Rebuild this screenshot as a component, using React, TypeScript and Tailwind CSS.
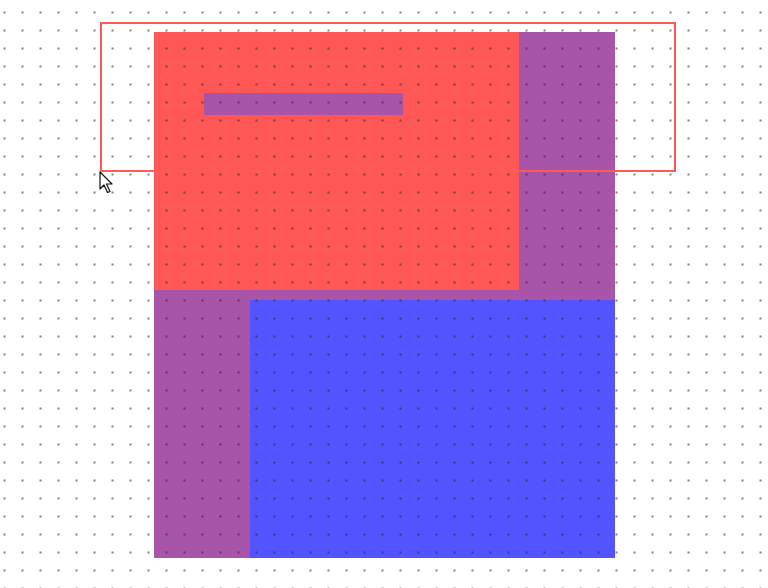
import React from "react";

export default function App() {
  return (
    <div className="relative w-[768px] h-[588px] overflow-hidden bg-white">
      {/* shapes on the canvas */}
      <div className="absolute left-[154px] top-[32px] w-[461px] h-[526px] bg-[#a754a9]" />
      <div className="absolute left-[154px] top-[32px] w-[365px] h-[258px] bg-[#ff5656]" />
      <div className="absolute left-[250px] top-[300px] w-[365px] h-[258px] bg-[#5353ff]" />
      <div className="absolute left-[204px] top-[93px] w-[199px] h-[22px] bg-[#a754a9]" />

      {/* dot grid overlay */}
      <div
        className="absolute inset-0 pointer-events-none bg-[radial-gradient(circle,rgba(40,40,40,0.6)_0.7px,transparent_1px)] bg-[length:18px_18px] bg-[position:-4.5px_3.5px]"
      />

      {/* selection rectangle */}
      <div className="absolute left-[100px] top-[22px] w-[576px] h-[150px] border-2 border-[#ff5a5a]" />

      {/* cursor */}
      <svg
        className="absolute left-[99px] top-[171px]"
        width="16"
        height="24"
        viewBox="0 0 16 24"
      >
        <path
          d="M1 1 L1 18 L5 14 L8.5 21.5 L11 20.5 L7.5 13 L13 13 Z"
          fill="#ffffff"
          stroke="#111111"
          strokeWidth="1.2"
          strokeLinejoin="round"
        />
      </svg>
    </div>
  );
}
